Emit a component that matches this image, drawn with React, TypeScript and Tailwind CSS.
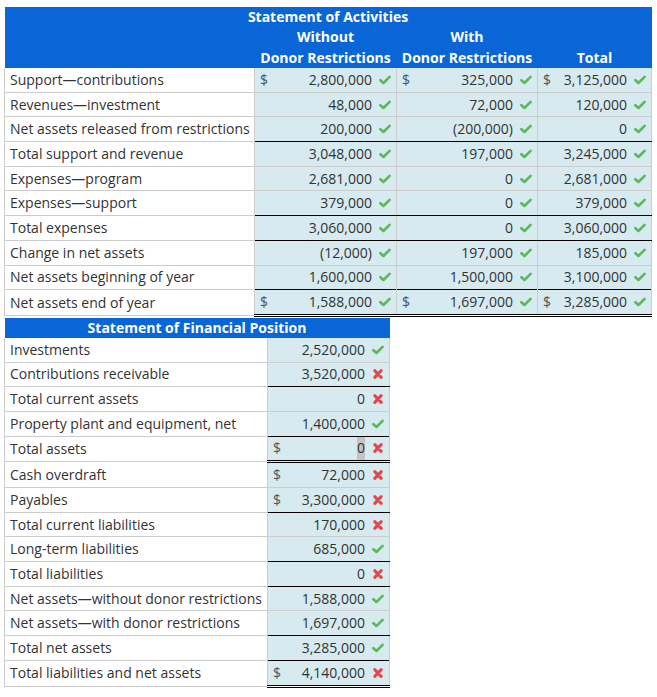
// Two worksheet tables: statement of activities and statement of
// financial position, with graded answer cells (check / cross marks).

type Mark = "ok" | "bad";

type Cell = {
  dollar?: boolean;
  value: string;
  mark: Mark;
  highlight?: boolean;
};

type Line = "none" | "single" | "double";

type Row = {
  label: string;
  cells: Cell[];
  line?: Line;
};

const activities: Row[] = [
  {
    label: "Support—contributions",
    cells: [
      { dollar: true, value: "2,800,000", mark: "ok" },
      { dollar: true, value: "325,000", mark: "ok" },
      { dollar: true, value: "3,125,000", mark: "ok" },
    ],
  },
  {
    label: "Revenues—investment",
    cells: [
      { value: "48,000", mark: "ok" },
      { value: "72,000", mark: "ok" },
      { value: "120,000", mark: "ok" },
    ],
  },
  {
    label: "Net assets released from restrictions",
    cells: [
      { value: "200,000", mark: "ok" },
      { value: "(200,000)", mark: "ok" },
      { value: "0", mark: "ok" },
    ],
    line: "single",
  },
  {
    label: "Total support and revenue",
    cells: [
      { value: "3,048,000", mark: "ok" },
      { value: "197,000", mark: "ok" },
      { value: "3,245,000", mark: "ok" },
    ],
  },
  {
    label: "Expenses—program",
    cells: [
      { value: "2,681,000", mark: "ok" },
      { value: "0", mark: "ok" },
      { value: "2,681,000", mark: "ok" },
    ],
  },
  {
    label: "Expenses—support",
    cells: [
      { value: "379,000", mark: "ok" },
      { value: "0", mark: "ok" },
      { value: "379,000", mark: "ok" },
    ],
    line: "single",
  },
  {
    label: "Total expenses",
    cells: [
      { value: "3,060,000", mark: "ok" },
      { value: "0", mark: "ok" },
      { value: "3,060,000", mark: "ok" },
    ],
    line: "single",
  },
  {
    label: "Change in net assets",
    cells: [
      { value: "(12,000)", mark: "ok" },
      { value: "197,000", mark: "ok" },
      { value: "185,000", mark: "ok" },
    ],
  },
  {
    label: "Net assets beginning of year",
    cells: [
      { value: "1,600,000", mark: "ok" },
      { value: "1,500,000", mark: "ok" },
      { value: "3,100,000", mark: "ok" },
    ],
    line: "single",
  },
  {
    label: "Net assets end of year",
    cells: [
      { dollar: true, value: "1,588,000", mark: "ok" },
      { dollar: true, value: "1,697,000", mark: "ok" },
      { dollar: true, value: "3,285,000", mark: "ok" },
    ],
    line: "double",
  },
];

const position: Row[] = [
  { label: "Investments", cells: [{ value: "2,520,000", mark: "ok" }] },
  { label: "Contributions receivable", cells: [{ value: "3,520,000", mark: "bad" }], line: "single" },
  { label: "Total current assets", cells: [{ value: "0", mark: "bad" }] },
  { label: "Property plant and equipment, net", cells: [{ value: "1,400,000", mark: "ok" }], line: "single" },
  { label: "Total assets", cells: [{ dollar: true, value: "0", mark: "bad", highlight: true }], line: "double" },
  { label: "Cash overdraft", cells: [{ dollar: true, value: "72,000", mark: "bad" }] },
  { label: "Payables", cells: [{ dollar: true, value: "3,300,000", mark: "bad" }], line: "single" },
  { label: "Total current liabilities", cells: [{ value: "170,000", mark: "bad" }] },
  { label: "Long-term liabilities", cells: [{ value: "685,000", mark: "ok" }], line: "single" },
  { label: "Total liabilities", cells: [{ value: "0", mark: "bad" }], line: "single" },
  { label: "Net assets—without donor restrictions", cells: [{ value: "1,588,000", mark: "ok" }] },
  { label: "Net assets—with donor restrictions", cells: [{ value: "1,697,000", mark: "ok" }], line: "single" },
  { label: "Total net assets", cells: [{ value: "3,285,000", mark: "ok" }], line: "single" },
  { label: "Total liabilities and net assets", cells: [{ dollar: true, value: "4,140,000", mark: "bad" }], line: "double" },
];

function CheckIcon() {
  return (
    <svg width="12" height="10" viewBox="0 0 12 10" className="shrink-0">
      <path d="M1.4 5.2 L4.4 8 L10.6 1.8" fill="none" stroke="#5cb85c" strokeWidth="2.6" strokeLinecap="round" strokeLinejoin="round" />
    </svg>
  );
}

function CrossIcon() {
  return (
    <svg width="12" height="10" viewBox="0 0 12 10" className="shrink-0">
      <path d="M2.8 1.6 L9.2 8.4 M9.2 1.6 L2.8 8.4" fill="none" stroke="#e2474b" strokeWidth="3" strokeLinecap="round" />
    </svg>
  );
}

function lineClass(line: Line | undefined) {
  if (line === "double") return "border-b-[3px] border-b-black border-double";
  if (line === "single") return "border-b border-b-black";
  return "border-b border-b-[#cccccc]";
}

function ValueCell({ cell, line }: { cell: Cell; line?: Line }) {
  return (
    <td className={`border-x border-x-[#cccccc] bg-[#d6eaf0] p-0 ${lineClass(line)}`}>
      <div className="flex h-[23.7px] items-stretch pl-[5px] pr-[5px]">
        <span className="flex items-center text-[#555555]">{cell.dollar ? "$" : ""}</span>
        <span
          className={`ml-auto flex items-center ${cell.highlight ? "bg-[#c4c4c4]" : ""}`}
        >
          {cell.value}
        </span>
        <span className="ml-[7px] flex items-center">
          {cell.mark === "ok" ? <CheckIcon /> : <CrossIcon />}
        </span>
      </div>
    </td>
  );
}

function LabelCell({ label }: { label: string }) {
  return (
    <td className="border-x border-b border-[#cccccc] bg-white p-0 pl-[5px] whitespace-nowrap">
      {label}
    </td>
  );
}

export default function App() {
  return (
    <div className="min-h-screen bg-white pl-[4px] pt-[7px] font-['Open_Sans',sans-serif] text-[14px] leading-[18px] text-[#333333]">
      <table className="w-[647px] table-fixed border-collapse">
        <colgroup>
          <col className="w-[250px]" />
          <col className="w-[142px]" />
          <col className="w-[141px]" />
          <col className="w-[114px]" />
        </colgroup>
        <thead className="bg-[#0a66d6] font-bold text-white">
          <tr className="h-[20px]">
            <th colSpan={4} className="p-0 text-center">Statement of Activities</th>
          </tr>
          <tr className="h-[20px]">
            <th className="p-0" />
            <th className="p-0 text-center">Without</th>
            <th className="p-0 text-center">With</th>
            <th className="p-0" />
          </tr>
          <tr className="h-[21px]">
            <th className="p-0" />
            <th className="p-0 text-center">Donor Restrictions</th>
            <th className="p-0 text-center">Donor Restrictions</th>
            <th className="p-0 text-center">Total</th>
          </tr>
        </thead>
        <tbody>
          {activities.map((row) => (
            <tr key={row.label}>
              <LabelCell label={row.label} />
              {row.cells.map((cell, i) => (
                <ValueCell key={i} cell={cell} line={row.line} />
              ))}
            </tr>
          ))}
        </tbody>
      </table>

      <table className="mt-[1px] w-[385px] table-fixed border-collapse">
        <colgroup>
          <col className="w-[263px]" />
          <col className="w-[122px]" />
        </colgroup>
        <thead className="bg-[#0a66d6] font-bold text-white">
          <tr className="h-[20px]">
            <th colSpan={2} className="p-0 text-center">Statement of Financial Position</th>
          </tr>
        </thead>
        <tbody>
          {position.map((row) => (
            <tr key={row.label}>
              <LabelCell label={row.label} />
              {row.cells.map((cell, i) => (
                <ValueCell key={i} cell={cell} line={row.line} />
              ))}
            </tr>
          ))}
        </tbody>
      </table>
    </div>
  );
}
